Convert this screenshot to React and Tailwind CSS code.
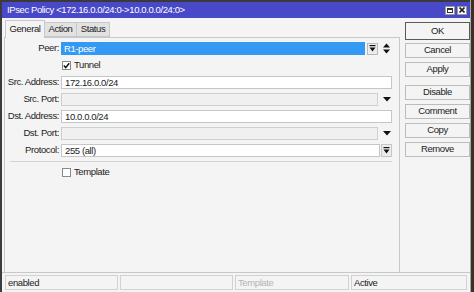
import React from 'react';

const font = "font-['Liberation_Sans',Arial,sans-serif] tracking-[-0.4px]";

const DownBar = () => (
  <svg width="7" height="7" viewBox="0 0 7 7">
    <rect x="0.5" y="0" width="6" height="1.2" fill="#111" />
    <path d="M0.5 2.5 L6.5 2.5 L3.5 6.5 Z" fill="#111" />
  </svg>
);

const Down = () => (
  <svg width="8" height="5" viewBox="0 0 8 5">
    <path d="M0 0 L8 0 L4 4.5 Z" fill="#111" />
  </svg>
);

const UpDown = () => (
  <svg width="7" height="11" viewBox="0 0 7 11">
    <path d="M0 4.5 L7 4.5 L3.5 0.5 Z" fill="#111" />
    <path d="M0 6.5 L7 6.5 L3.5 10.5 Z" fill="#111" />
  </svg>
);

const Label = ({ children }) => (
  <div className="w-[56px] shrink-0 pr-[2px] text-right text-[#222] whitespace-nowrap">{children}</div>
);

const Field = ({ label, value, grey, suffix, width = 'w-[331px]' }) => (
  <div className="flex items-center h-[13px]">
    <Label>{label}</Label>
    <div
      className={`${width} h-[13px] border ${grey ? 'bg-[#f0f0f0] border-[#cfcfcf]' : 'bg-white border-[#c6c6c6]'} px-[3px] leading-[11px] text-[#222] whitespace-nowrap`}
    >
      {value}
    </div>
    {suffix}
  </div>
);

const Check = ({ checked, label }) => (
  <div className="flex items-center h-[13px] pl-[57px]">
    <div className="w-[9px] h-[9px] border border-[#8a8a8a] bg-white flex items-center justify-center">
      {checked && (
        <svg width="7" height="7" viewBox="0 0 7 7">
          <path d="M0.8 3.6 L2.7 5.6 L6.2 1.2" stroke="#111" strokeWidth="1.5" fill="none" />
        </svg>
      )}
    </div>
    <span className="ml-[3px] text-[#222]">{label}</span>
  </div>
);

const Btn = ({ children, main, className = '' }) => (
  <div
    className={`w-[65px] flex items-center justify-center bg-[#f4f4f4] text-[#222] ${main ? 'h-[18px] border border-[#5a5a5a]' : 'h-[15px] border border-[#bcbcbc]'} ${className}`}
  >
    {children}
  </div>
);

export default function App() {
  return (
    <div className={`w-[474px] h-[292px] bg-[#3a3226] flex overflow-hidden text-[9.5px] ${font}`}>
      <div className="w-[471px] h-full flex flex-col bg-[#f4f4f4] border-l-2 border-[#3c3c3c] border-r border-r-[#a8a8a8]">
        {/* title bar */}
        <div className="h-[18px] shrink-0 border-t-2 border-[#3a3a3a] bg-[#4848c8] flex items-center pl-[5px] pr-[3px]">
          <span className="text-white leading-none flex-1">
            IPsec Policy &lt;172.16.0.0/24:0-&gt;10.0.0.0/24:0&gt;
          </span>
          <div className="flex gap-[2px]">
            <div className="w-[10px] h-[9px] bg-white border border-[#999] flex items-center justify-center">
              <div className="w-[6px] h-[5px] border border-[#333] border-t-2" />
            </div>
            <div className="w-[10px] h-[9px] bg-white border border-[#999] flex items-center justify-center">
              <svg width="6" height="6" viewBox="0 0 6 6">
                <path d="M0.5 0.5 L5.5 5.5 M5.5 0.5 L0.5 5.5" stroke="#222" strokeWidth="1.6" />
              </svg>
            </div>
          </div>
        </div>

        {/* body */}
        <div className="flex-1 flex min-h-0">
          <div className="w-[397px] ml-[2px] flex flex-col pt-[2px]">
            <div className="flex h-[17px] items-end pl-[1px]">
              <div className="h-[18px] w-[40px] -mb-px border border-b-0 border-[#c8c8c8] bg-[#f4f4f4] flex items-center justify-center text-[#222] relative z-10">
                General
              </div>
              <div className="h-[15px] w-[32px] border border-l-0 border-[#c8c8c8] bg-[#e2e2e2] flex items-center justify-center text-[#222]">
                Action
              </div>
              <div className="h-[15px] w-[33px] border border-l-0 border-[#c8c8c8] bg-[#e2e2e2] flex items-center justify-center text-[#222]">
                Status
              </div>
            </div>
            <div className="flex-1 border border-b-0 border-[#c8c8c8] flex flex-col gap-[4px] pt-[4px]">
              <div className="flex items-center h-[13px]">
                <Label>Peer:</Label>
                <div className="w-[304px] h-[13px] bg-[#3399f2] px-[3px] leading-[13px] text-white">R1-peer</div>
                <div className="ml-[2px] w-[11px] h-[12px] border border-[#b8b8b8] bg-[#ececec] flex items-center justify-center">
                  <DownBar />
                </div>
                <div className="ml-[5px]">
                  <UpDown />
                </div>
              </div>
              <Check checked label="Tunnel" />
              <Field label="Src. Address:" value="172.16.0.0/24" />
              <Field
                label="Src. Port:"
                grey
                width="w-[317px]"
                suffix={<div className="ml-[5px]"><Down /></div>}
              />
              <Field label="Dst. Address:" value="10.0.0.0/24" />
              <Field
                label="Dst. Port:"
                grey
                width="w-[317px]"
                suffix={<div className="ml-[5px]"><Down /></div>}
              />
              <Field
                label="Protocol:"
                value="255 (all)"
                width="w-[319px]"
                suffix={
                  <div className="ml-px w-[11px] h-[13px] border border-[#c6c6c6] bg-[#ececec] flex items-center justify-center">
                    <DownBar />
                  </div>
                }
              />
              <div className="ml-[5px] w-[382px] h-px bg-[#d4d4d4]" />
              <Check label="Template" />
            </div>
          </div>
          <div className="ml-[5px] flex flex-col pt-[4px]">
            <Btn main>OK</Btn>
            <Btn className="mt-[3px]">Cancel</Btn>
            <Btn className="mt-[4px]">Apply</Btn>
            <Btn className="mt-[8px]">Disable</Btn>
            <Btn className="mt-[4px]">Comment</Btn>
            <Btn className="mt-[4px]">Copy</Btn>
            <Btn className="mt-[4px]">Remove</Btn>
          </div>
        </div>

        {/* status bar */}
        <div className="h-[20px] shrink-0 border-t border-[#c8c8c8] flex gap-[2px] pl-[3px] pt-[2px] pb-[2px]">
          <div className="w-[113px] border border-[#d2d2d2] pl-[2px] leading-[13px] text-[#222]">enabled</div>
          <div className="w-[113px] border border-[#d2d2d2]" />
          <div className="w-[114px] border border-[#d2d2d2] pl-[2px] leading-[13px] text-[#b4b4b4]">Template</div>
          <div className="w-[116px] border border-[#d2d2d2] pl-[2px] leading-[13px] text-[#222]">Active</div>
        </div>
      </div>
    </div>
  );
}
